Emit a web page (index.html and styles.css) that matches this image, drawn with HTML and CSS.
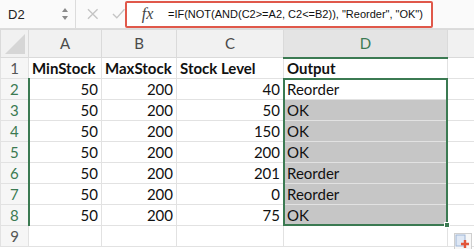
FILE: index.html
```html
<!DOCTYPE html>
<html lang="en">
<head>
    <meta charset="UTF-8">
    <title>Stock Check</title>
    <link rel="stylesheet" href="styles.css">
</head>
<body>
    <div class="formula-bar">
        <div class="name-box">
            <span>D2</span>
            <svg class="spin" width="8" height="14" viewBox="0 0 8 14">
                <path d="M1 5 L4 1 L7 5 Z" fill="#8a8a8a"/>
                <path d="M1 9 L4 13 L7 9 Z" fill="#8a8a8a"/>
            </svg>
        </div>
        <div class="controls">
            <svg width="12" height="12" viewBox="0 0 12 12"><path d="M1 1 L11 11 M11 1 L1 11" stroke="#c4c4c4" stroke-width="1.4"/></svg>
            <svg width="14" height="12" viewBox="0 0 14 12"><path d="M1 6 L5 10 L13 1" stroke="#c4c4c4" stroke-width="1.4" fill="none"/></svg>
        </div>
        <div class="formula">
            <span class="fx">fx</span>
            <span class="formula-text">=IF(NOT(AND(C2&gt;=A2, C2&lt;=B2)), "Reorder", "OK")</span>
        </div>
    </div>

    <div class="sheet-wrap">
        <table class="sheet">
            <colgroup>
                <col style="width: 28px">
                <col style="width: 73px">
                <col style="width: 75px">
                <col style="width: 107px">
                <col style="width: 164px">
                <col style="width: 40px">
            </colgroup>
            <tr class="col-heads">
                <th class="corner"><span class="tri"></span></th>
                <th>A</th>
                <th>B</th>
                <th>C</th>
                <th class="active-col">D</th>
                <th></th>
            </tr>
            <tr>
                <th class="row-num">1</th>
                <td class="bold">MinStock</td>
                <td class="bold">MaxStock</td>
                <td class="bold">Stock Level</td>
                <td class="bold">Output</td>
                <td></td>
            </tr>
            <tr>
                <th class="row-num sel">2</th>
                <td class="num">50</td><td class="num">200</td><td class="num">40</td>
                <td>Reorder</td><td></td>
            </tr>
            <tr>
                <th class="row-num sel">3</th>
                <td class="num">50</td><td class="num">200</td><td class="num">50</td>
                <td class="shade">OK</td><td></td>
            </tr>
            <tr>
                <th class="row-num sel">4</th>
                <td class="num">50</td><td class="num">200</td><td class="num">150</td>
                <td class="shade">OK</td><td></td>
            </tr>
            <tr>
                <th class="row-num sel">5</th>
                <td class="num">50</td><td class="num">200</td><td class="num">200</td>
                <td class="shade">OK</td><td></td>
            </tr>
            <tr>
                <th class="row-num sel">6</th>
                <td class="num">50</td><td class="num">200</td><td class="num">201</td>
                <td class="shade">Reorder</td><td></td>
            </tr>
            <tr>
                <th class="row-num sel">7</th>
                <td class="num">50</td><td class="num">200</td><td class="num">0</td>
                <td class="shade">Reorder</td><td></td>
            </tr>
            <tr>
                <th class="row-num sel">8</th>
                <td class="num">50</td><td class="num">200</td><td class="num">75</td>
                <td class="shade">OK</td><td></td>
            </tr>
            <tr>
                <th class="row-num">9</th>
                <td></td><td></td><td></td><td></td><td></td>
            </tr>
        </table>

        <!-- selection outline for D2:D8 -->
        <div class="selection"><span class="handle"></span></div>
        <div class="fill-opt">
            <svg width="16" height="16" viewBox="0 0 16 16">
                <rect x="1" y="1" width="9" height="11" fill="#dfe8f5" stroke="#9fb6d6"/>
                <path d="M10 6 V14 M6 10 H14" stroke="#e2553a" stroke-width="2.4"/>
            </svg>
        </div>
    </div>
</body>
</html>
```

FILE: styles.css
```css
* {
    margin: 0;
    padding: 0;
    box-sizing: border-box;
}
body {
    width: 474px;
    height: 249px;
    overflow: hidden;
    background: #fff;
    font-family: Lato, "Open Sans", Arial, sans-serif;
    color: #111;
}
.formula-bar {
    display: flex;
    align-items: center;
    height: 29px;
    background: #fafafa;
    border-bottom: 1px solid #dcdcdc;
}
.name-box {
    width: 76px;
    height: 100%;
    display: flex;
    align-items: center;
    justify-content: space-between;
    padding: 0 6px 0 8px;
    border-right: 1px solid #dcdcdc;
    font-family: "Liberation Sans", Arial, sans-serif;
    font-size: 13px;
    color: #222;
}
.controls {
    width: 49px;
    display: flex;
    align-items: center;
    gap: 13px;
    padding-left: 11px;
}
.formula {
    width: 308px;
    height: 27px;
    border: 2px solid #e0584a;
    border-radius: 2px;
    display: flex;
    align-items: center;
    background: #fff;
}
.fx {
    font-family: "Liberation Serif", "Times New Roman", serif;
    font-style: italic;
    font-size: 16px;
    color: #444;
    width: 41px;
    text-align: center;
}
.formula-text {
    font-family: "Liberation Sans", Arial, sans-serif;
    font-size: 11px;
    color: #111;
    white-space: nowrap;
}
.sheet-wrap {
    position: relative;
}
.sheet {
    border-collapse: collapse;
    table-layout: fixed;
    width: 487px;
}
.sheet th,
.sheet td {
    height: 21px;
    border: 1px solid #e2e2e2;
    font-size: 15px;
    line-height: 19px;
    padding: 0 3px;
    white-space: nowrap;
    overflow: hidden;
}
.col-heads th {
    height: 28px;
    background: #f1f1f1;
    border-color: #dadada;
    font-weight: normal;
    color: #4a4a4a;
    font-size: 15px;
}
.col-heads .active-col {
    background: #e4e4e4;
    border-bottom: 2px solid #3b7a52;
    color: #3b7a52;
}
.corner {
    position: relative;
}
.tri {
    position: absolute;
    right: 3px;
    bottom: 3px;
    width: 0;
    height: 0;
    border-left: 20px solid transparent;
    border-bottom: 20px solid #d6d6d6;
}
.row-num {
    background: #f6f6f6;
    font-weight: normal;
    color: #555;
    text-align: center;
}
.row-num.sel {
    color: #3b7a52;
    border-right: 2px solid #3b7a52;
}
.bold {
    font-weight: bold;
}
.num {
    text-align: right;
}
.shade {
    background: #c6c6c6;
    border-color: #b3b3b3;
}
.selection {
    position: absolute;
    left: 283px;
    top: 49px;
    width: 165px;
    height: 148px;
    border: 2px solid #3b7a52;
    pointer-events: none;
}
.handle {
    position: absolute;
    right: -4px;
    bottom: -4px;
    width: 6px;
    height: 6px;
    background: #3b7a52;
    border: 1px solid #fff;
}
.fill-opt {
    position: absolute;
    left: 454px;
    top: 204px;
    width: 18px;
    height: 18px;
    border: 1px solid #cfcfcf;
    background: #f7f7f7;
    display: flex;
    align-items: center;
    justify-content: center;
}
```
